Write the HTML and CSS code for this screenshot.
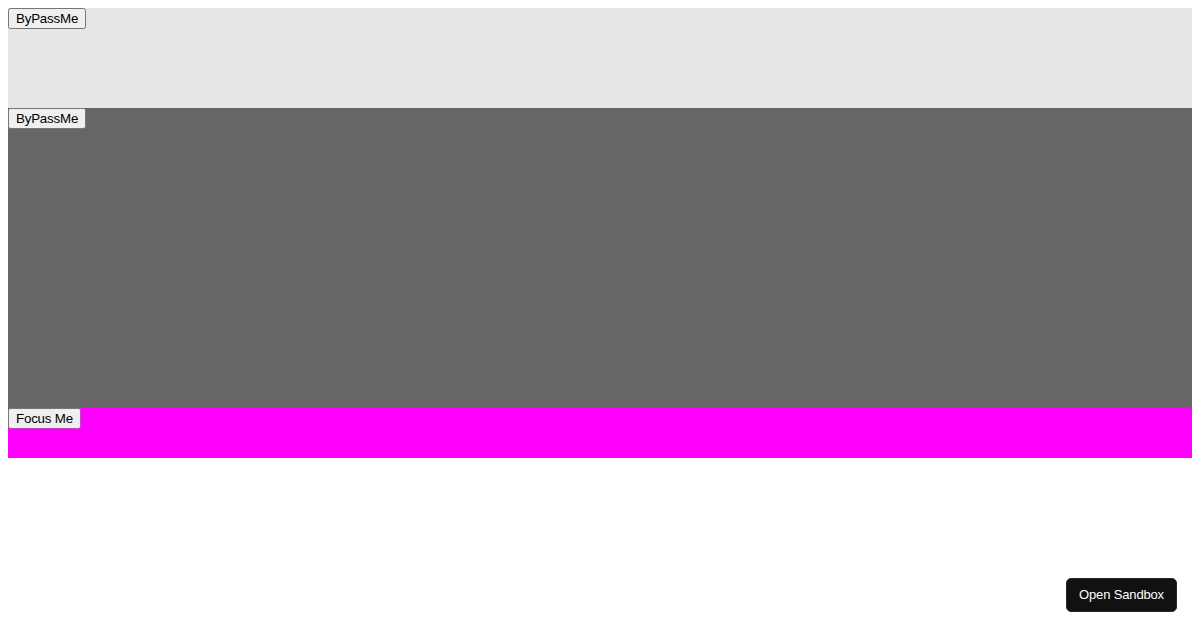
FILE: index.html
```html
<!DOCTYPE html>
<html>
<head>
<meta charset="utf-8">
<link rel="stylesheet" href="styles.css">
</head>
<body>
<div class="sec sec-light"><button class="btn">ByPassMe</button></div>
<div class="sec sec-dark"><button class="btn">ByPassMe</button></div>
<div class="sec sec-pink"><button class="btn">Focus Me</button></div>
<button class="sandbox">Open Sandbox</button>
</body>
</html>
```
FILE: styles.css
```css
body {
  margin: 8px;
  font-family: "Liberation Sans", Arial, sans-serif;
}
.sec {
  display: block;
}
.sec-light {
  height: 100px;
  background: #e6e6e6;
}
.sec-dark {
  height: 300px;
  background: #666666;
}
.sec-pink {
  height: 50px;
  background: #ff00ff;
}
.btn {
  font-family: "Liberation Sans", Arial, sans-serif;
  font-size: 13.333px;
  letter-spacing: -0.2px;
}
.sandbox {
  position: fixed;
  right: 23px;
  bottom: 18px;
  width: 111px;
  height: 34px;
  background: #111111;
  color: #ffffff;
  border: 1px solid #2a2a2a;
  border-radius: 5px;
  font-family: "Liberation Sans", Arial, sans-serif;
  font-size: 13px;
  letter-spacing: -0.15px;
  padding: 0 0 2px 0;
}
```
